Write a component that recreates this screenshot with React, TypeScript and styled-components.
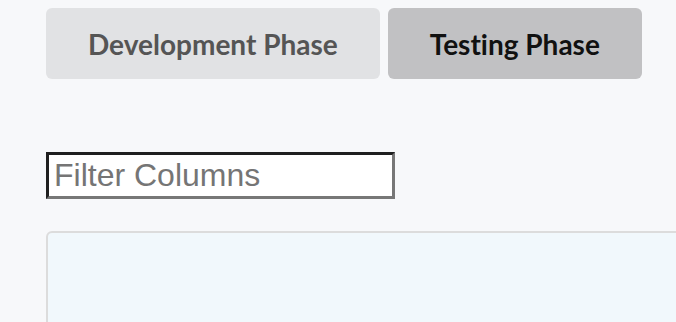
import React from "react";
import styled, { createGlobalStyle } from "styled-components";

const Global = createGlobalStyle`
  html, body {
    margin: 0;
    padding: 0;
    background: #f7f8fa;
    overflow: hidden;
  }
  body {
    font-family: Lato, "Open Sans", sans-serif;
  }
`;

const Page = styled.div`
  padding: 8px 0 0 46px;
  display: flex;
  flex-direction: column;
  align-items: flex-start;
  height: 314px;
  overflow: hidden;
`;

const Tabs = styled.div`
  display: flex;
  gap: 8px;
`;

const Tab = styled.button<{ $active?: boolean }>`
  height: 71px;
  padding: 0 42px;
  border: none;
  border-radius: 6px;
  font-family: Lato, sans-serif;
  font-weight: 700;
  font-size: 28px;
  font-variant-ligatures: none;
  background: ${(p) => (p.$active ? "#c1c1c3" : "#e1e2e4")};
  color: ${(p) => (p.$active ? "#111111" : "#555555")};
  cursor: pointer;
`;

const Filter = styled.input`
  margin-top: 73px;
  box-sizing: border-box;
  width: 349px;
  height: 48px;
  padding: 2px 5px;
  font-family: "Liberation Sans", Arial, sans-serif;
  font-size: 32px;
  color: #111;
  background: #ffffff;
  border-width: 3px;
  border-style: solid;
  border-color: #1f1f1f #777777 #777777 #1f1f1f;
  outline: none;
  &::placeholder {
    color: #757575;
  }
`;

const Panel = styled.div`
  margin-top: 32px;
  width: 700px;
  height: 120px;
  flex-shrink: 0;
  box-sizing: border-box;
  background: #f1f8fc;
  border: 2px solid #dcdcdc;
  border-radius: 6px;
`;

export default function App() {
  return (
    <>
      <Global />
      <Page>
        <Tabs>
          <Tab>Development Phase</Tab>
          <Tab $active>Testing Phase</Tab>
        </Tabs>
        <Filter placeholder="Filter Columns" />
        <Panel />
      </Page>
    </>
  );
}
